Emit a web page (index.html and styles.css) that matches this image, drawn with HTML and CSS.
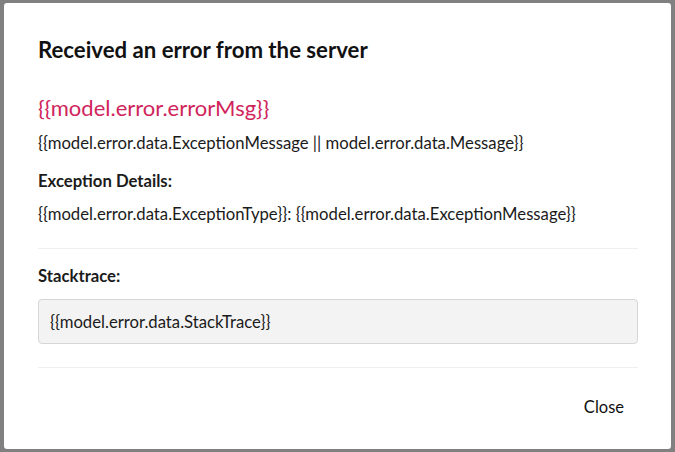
FILE: index.html
```html
<!DOCTYPE html>
<html>
<head>
<meta charset="utf-8">
<link rel="stylesheet" href="styles.css">
</head>
<body>
<div class="backdrop">
  <div class="modal">
    <div class="modal-header">
      <h3 class="modal-title">Received an error from the server</h3>
    </div>
    <div class="modal-body">
      <h4 class="error-msg">{{model.error.errorMsg}}</h4>
      <p class="line">{{model.error.data.ExceptionMessage || model.error.data.Message}}</p>
      <p class="label">Exception Details:</p>
      <p class="line">{{model.error.data.ExceptionType}}: {{model.error.data.ExceptionMessage}}</p>
      <hr class="sep">
      <p class="label">Stacktrace:</p>
      <pre class="trace">{{model.error.data.StackTrace}}</pre>
      <hr class="sep">
    </div>
    <div class="modal-footer">
      <button class="btn-close">Close</button>
    </div>
  </div>
</div>
</body>
</html>
```
FILE: styles.css
```css
html, body {
  margin: 0;
  padding: 0;
  height: 100%;
}
body {
  font-family: Lato, "Open Sans", sans-serif;
  color: #1b1b1b;
  background: #808080;
}
.backdrop {
  box-sizing: border-box;
  height: 452px;
  padding: 3px 4px 3px 4px;
}
.modal {
  box-sizing: border-box;
  height: 100%;
  background: #fff;
  border-radius: 3px;
  padding: 0 33px 0 34px;
  display: flex;
  flex-direction: column;
}
.modal-header {
  padding-top: 33px;
}
.modal-title {
  margin: 0;
  font-size: 22.2px;
  font-weight: 700;
  line-height: 28px;
  color: #111;
}
.modal-body {
  padding-top: 30px;
}
.error-msg {
  margin: 0;
  font-size: 22px;
  font-weight: 400;
  line-height: 28px;
  color: #d0245c;
}
.line {
  margin: 9px 0 0 0;
  font-size: 16.7px;
  line-height: 24px;
}
.label {
  margin: 14px 0 0 0;
  font-size: 16.7px;
  font-weight: 700;
  line-height: 24px;
}
.label + .line {
  margin-top: 9px;
}
.sep {
  border: 0;
  border-top: 1px solid #eeeeee;
  margin: 22px 0 0 0;
}
.sep + .label {
  margin-top: 15px;
}
.trace {
  margin: 11px 0 0 0;
  background: #f4f3f3;
  border: 1px solid #d6d6d6;
  border-radius: 4px;
  padding: 10px 11px 9px 11px;
  font-family: Lato, "Open Sans", sans-serif;
  font-size: 16.7px;
  line-height: 24px;
  color: #1b1b1b;
}
.trace + .sep {
  margin-top: 23px;
}
.modal-footer {
  display: flex;
  justify-content: flex-end;
  padding-top: 27px;
}
.btn-close {
  background: none;
  border: 0;
  font-family: Lato, "Open Sans", sans-serif;
  font-size: 16.5px;
  color: #111;
  padding: 0 14px 0 0;
  line-height: 24px;
  cursor: pointer;
}
```
